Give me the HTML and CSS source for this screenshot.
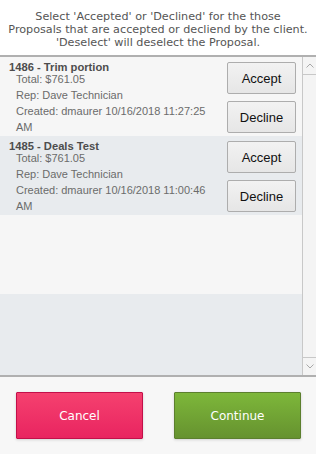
FILE: index.html
```html
<!DOCTYPE html>
<html lang="en">
<head>
    <meta charset="UTF-8">
    <meta name="viewport" content="width=device-width, initial-scale=1.0">
    <title>Proposal Status</title>
    <link rel="stylesheet" href="styles.css">
</head>
<body>
    <div class="proposal-dialog">
        <!-- Instructions -->
        <div class="intro">
            Select 'Accepted' or 'Declined' for the those<br>
            Proposals that are accepted or decliend by the client.<br>
            'Deselect' will deselect the Proposal.
        </div>

        <!-- Proposal List -->
        <div class="proposal-list">
            <div class="rows">
                <div class="proposal-row">
                    <div class="proposal-info">
                        <div class="proposal-title">1486 - Trim portion</div>
                        <div class="proposal-line first">Total: $761.05</div>
                        <div class="proposal-line">Rep: Dave Technician</div>
                        <div class="proposal-line">Created: dmaurer 10/16/2018 11:27:25 AM</div>
                    </div>
                    <div class="proposal-actions">
                        <button class="small-button">Accept</button>
                        <button class="small-button">Decline</button>
                    </div>
                </div>
                <div class="proposal-row alt">
                    <div class="proposal-info">
                        <div class="proposal-title">1485 - Deals Test</div>
                        <div class="proposal-line first">Total: $761.05</div>
                        <div class="proposal-line">Rep: Dave Technician</div>
                        <div class="proposal-line">Created: dmaurer 10/16/2018 11:00:46 AM</div>
                    </div>
                    <div class="proposal-actions">
                        <button class="small-button">Accept</button>
                        <button class="small-button">Decline</button>
                    </div>
                </div>
                <div class="proposal-row empty"></div>
                <div class="proposal-row empty alt"></div>
            </div>
            <div class="scrollbar">
                <div class="scroll-arrow">
                    <svg width="8" height="5" viewBox="0 0 8 5"><path d="M0.5 4.5 L4 1 L7.5 4.5" fill="none" stroke="#a8a8a8" stroke-width="1"/></svg>
                </div>
                <div class="scroll-track"></div>
                <div class="scroll-arrow bottom">
                    <svg width="8" height="5" viewBox="0 0 8 5"><path d="M0.5 0.5 L4 4 L7.5 0.5" fill="none" stroke="#a8a8a8" stroke-width="1"/></svg>
                </div>
            </div>
        </div>

        <!-- Footer Buttons -->
        <div class="dialog-footer">
            <button class="big-button cancel">Cancel</button>
            <button class="big-button continue">Continue</button>
        </div>
    </div>
</body>
</html>
```

FILE: styles.css
```css
body {
    margin: 0;
    background: #ffffff;
    font-family: "DejaVu Sans", Verdana, sans-serif;
}
.proposal-dialog {
    width: 316px;
    height: 454px;
    display: flex;
    flex-direction: column;
}

/* Instructions */
.intro {
    height: 45px;
    padding: 10px 0 0;
    font-size: 11.2px;
    line-height: 13px;
    color: #555;
    text-align: center;
    white-space: nowrap;
}

/* Proposal List */
.proposal-list {
    height: 318px;
    display: flex;
    border-top: 2px solid #b0b0b0;
    border-bottom: 2px solid #b0b0b0;
}
.rows {
    flex: 1;
    display: flex;
    flex-direction: column;
    overflow: hidden;
}
.proposal-row {
    height: 79px;
    flex-shrink: 0;
    display: flex;
    padding: 4px 6px 0 9px;
    box-sizing: border-box;
    background: #f6f6f6;
    font-family: "Liberation Sans", Arial, sans-serif;
}
.proposal-row.alt {
    background: #e8ebee;
}
.proposal-row.empty:last-child {
    flex: 1;
}
.proposal-info {
    flex: 1;
    padding-right: 8px;
}
.proposal-title {
    font-size: 11.2px;
    font-weight: bold;
    color: #4d4d4d;
    line-height: 12px;
}
.proposal-line {
    font-size: 11px;
    color: #6b6b6b;
    line-height: 16px;
    padding-left: 7px;
}
.proposal-line.first {
    margin-top: -2px;
}
.proposal-actions {
    width: 69px;
    padding-top: 1px;
    display: flex;
    flex-direction: column;
    gap: 7px;
}
.small-button {
    height: 32px;
    font-family: "Liberation Sans", Arial, sans-serif;
    font-size: 13px;
    color: #111;
    background: linear-gradient(#f2f2f2, #e6e6e6);
    border: 1px solid #adadad;
    border-radius: 2px;
    padding: 0;
}

/* Scrollbar */
.scrollbar {
    width: 13px;
    border-left: 1px solid #c8c8c8;
    background: #f4f4f4;
    display: flex;
    flex-direction: column;
}
.scroll-arrow {
    height: 17px;
    display: flex;
    align-items: center;
    justify-content: center;
    border-bottom: 1px solid #c8c8c8;
}
.scroll-arrow.bottom {
    border-bottom: none;
    border-top: 1px solid #c8c8c8;
}
.scroll-track {
    flex: 1;
}

/* Footer */
.dialog-footer {
    flex: 1;
    background: #f7f7f7;
    display: flex;
    justify-content: space-between;
    padding: 15px 15px 0 16px;
}
.big-button {
    width: 127px;
    height: 47px;
    font-family: "DejaVu Sans", Verdana, sans-serif;
    font-size: 12px;
    color: #fff;
    border-radius: 1px;
    box-shadow: 0 1px 3px rgba(0,0,0,0.15);
}
.big-button.cancel {
    background: linear-gradient(#f5416f, #e92460);
    border: 1px solid #c30f4a;
}
.big-button.continue {
    background: linear-gradient(#7db73a, #66922f);
    border: 1px solid #5c7f2e;
}
```
